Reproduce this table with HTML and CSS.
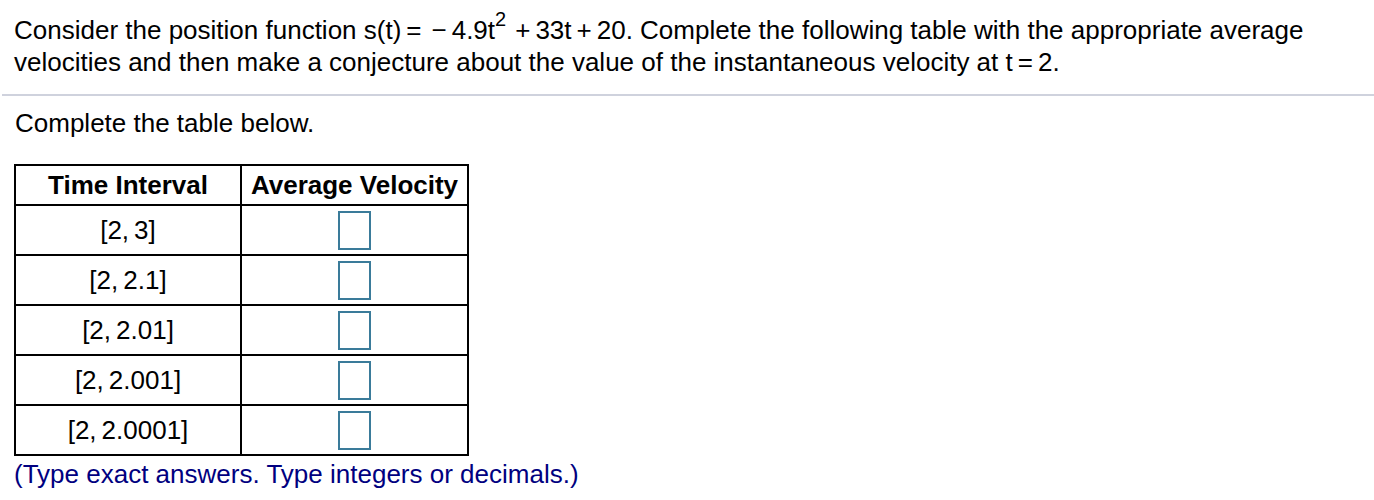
FILE: index.html
```html
<!DOCTYPE html>
<html>
<head>
<meta charset="utf-8">
<link rel="stylesheet" href="styles.css">
</head>
<body>
<div class="question">
  <p class="stem">Consider the position function s(t)<span class="op">=</span><span class="op">−</span>4.9t<sup>2</sup><span class="op">+</span>33t<span class="op">+</span>20. Complete the following table with the appropriate average velocities and then make a conjecture about the value of the instantaneous velocity at t<span class="op">=</span>2.</p>
</div>
<hr class="divider">
<div class="answer">
  <p class="lead">Complete the table below.</p>
  <table class="grid">
    <colgroup><col class="col-t"><col class="col-v"></colgroup>
    <thead>
      <tr><th>Time Interval</th><th>Average Velocity</th></tr>
    </thead>
    <tbody>
      <tr><td>[2,<span class="sp"></span>3]</td><td><span class="box"></span></td></tr>
      <tr><td>[2,<span class="sp"></span>2.1]</td><td><span class="box"></span></td></tr>
      <tr><td>[2,<span class="sp"></span>2.01]</td><td><span class="box"></span></td></tr>
      <tr><td>[2,<span class="sp"></span>2.001]</td><td><span class="box"></span></td></tr>
      <tr><td>[2,<span class="sp"></span>2.0001]</td><td><span class="box"></span></td></tr>
    </tbody>
  </table>
  <p class="hint">(Type exact answers. Type integers or decimals.)</p>
</div>
</body>
</html>
```
FILE: styles.css
```css
html, body {
  margin: 0;
  padding: 0;
  background: #fff;
}
body {
  font-family: "Liberation Sans", Arial, sans-serif;
  color: #000;
}
.question {
  padding: 14px 0 0 14px;
}
.stem {
  margin: 0;
  font-size: 26px;
  line-height: 32px;
  width: 1340px;
}
.stem .op {
  margin: 0 5px;
}
.stem sup {
  font-size: 20px;
  line-height: 0;
  vertical-align: 13px;
  margin-right: 4px;
}
.divider {
  border: 0;
  height: 2px;
  background: #cfd2dd;
  margin: 16px 0 0 2px;
}
.answer {
  padding: 0 0 0 14px;
}
.lead {
  margin: 12px 0 0 1px;
  font-size: 26px;
  line-height: 30px;
}
.grid {
  margin-top: 26px;
  border-collapse: collapse;
  table-layout: fixed;
  width: 453px;
  font-size: 26px;
}
.col-t { width: 226px; }
.col-v { width: 227px; }
.grid th, .grid td {
  border: 2px solid #000;
  text-align: center;
  padding: 0;
}
.grid th {
  height: 38px;
  font-weight: bold;
}
.grid td {
  height: 48px;
}
.sp {
  display: inline-block;
  width: 5px;
}
.box {
  display: inline-block;
  width: 29px;
  height: 35px;
  border: 2px solid #3a7b9a;
  vertical-align: middle;
}
.hint {
  margin: 3px 0 0 0;
  font-size: 26px;
  line-height: 30px;
  color: #000080;
}
```
